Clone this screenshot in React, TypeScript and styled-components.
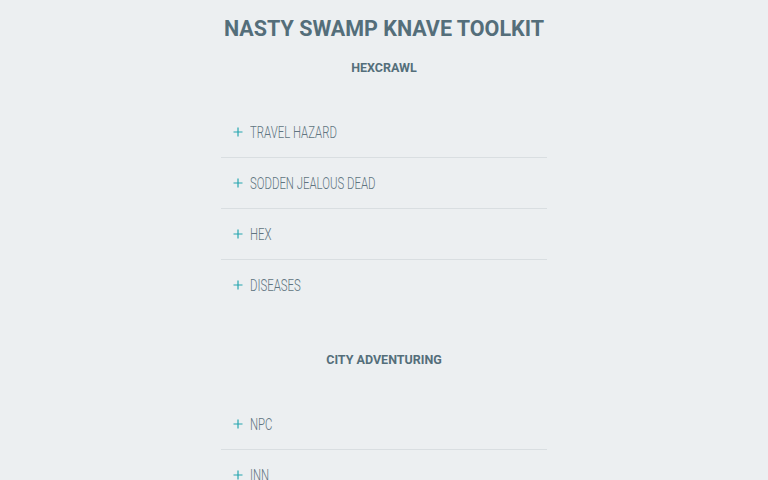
import { useState } from 'react';
import styled, { createGlobalStyle } from 'styled-components';

const sections = [
  {
    title: 'Hexcrawl',
    items: ['Travel Hazard', 'Sodden Jealous Dead', 'Hex', 'Diseases'],
  },
  {
    title: 'City Adventuring',
    items: ['NPC', 'Inn', 'Shop', 'Street Event'],
  },
];

const App = () => {
  const [open, setOpen] = useState<string | null>(null);

  return (
    <Page>
      <GlobalStyle />
      <Title>Nasty Swamp Knave Toolkit</Title>
      {sections.map((section) => (
        <Section key={section.title}>
          <SectionTitle>{section.title}</SectionTitle>
          <List>
            {section.items.map((item) => {
              const key = section.title + item;
              return (
                <Row key={key} onClick={() => setOpen(open === key ? null : key)}>
                  <Plus viewBox="0 0 10 10">
                    <path d="M5 0.5V9.5M0.5 5H9.5" />
                  </Plus>
                  <Label>{item}</Label>
                </Row>
              );
            })}
          </List>
        </Section>
      ))}
    </Page>
  );
};

export default App;

const GlobalStyle = createGlobalStyle`
  body {
    margin: 0;
    background: #eceff1;
    font-family: Roboto, "Liberation Sans", sans-serif;
  }
`;

const Page = styled.div`
  width: 326px;
  margin: 0 auto;
  padding-top: 15px;
`;

const Title = styled.h1`
  margin: 0;
  font-size: 21.5px;
  font-weight: 700;
  line-height: 28px;
  text-align: center;
  text-transform: uppercase;
  color: #546e7a;
  white-space: nowrap;
`;

const Section = styled.section`
  padding-bottom: 25px;
`;

const SectionTitle = styled.h2`
  margin: 18px 0 32px;
  font-size: 12.5px;
  font-weight: 700;
  line-height: 14px;
  text-align: center;
  text-transform: uppercase;
  color: #546e7a;
`;

const List = styled.ul`
  margin: 0;
  padding: 0;
  list-style: none;
`;

const Row = styled.li`
  display: flex;
  align-items: center;
  gap: 7px;
  height: 50px;
  padding-left: 12px;
  border-bottom: 1px solid #d9dee1;
  cursor: pointer;

  &:last-child {
    border-bottom: none;
  }
`;

const Plus = styled.svg`
  flex: none;
  width: 10px;
  height: 10px;
  fill: none;
  stroke: #26a6b0;
  stroke-width: 1.2;
`;

// condensed caps: Roboto Light squeezed sideways
const Label = styled.span`
  display: inline-block;
  font-family: Roboto, "Liberation Sans", sans-serif;
  font-size: 16.5px;
  font-weight: 300;
  text-transform: uppercase;
  color: #607480;
  white-space: nowrap;
  transform: scaleX(0.69);
  transform-origin: left center;
`;
